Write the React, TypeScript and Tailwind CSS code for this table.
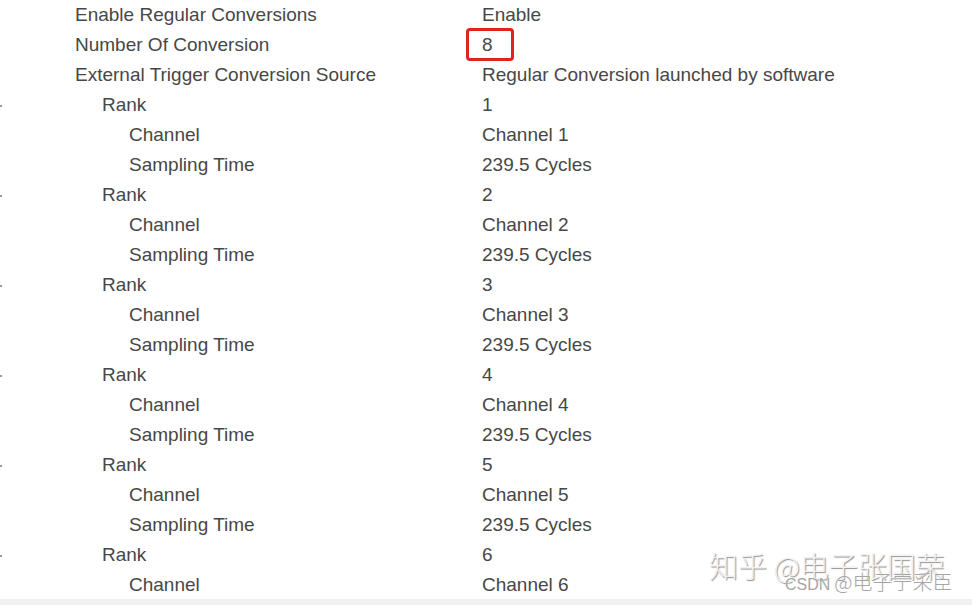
import React from "react";

type Row = { level: 0 | 1 | 2; label: string; value: string; dot?: boolean; boxed?: boolean };

const rows: Row[] = [
  { level: 0, label: "Enable Regular Conversions", value: "Enable" },
  { level: 0, label: "Number Of Conversion", value: "8", boxed: true },
  { level: 0, label: "External Trigger Conversion Source", value: "Regular Conversion launched by software" },
];
for (let i = 1; i <= 6; i++) {
  rows.push({ level: 1, label: "Rank", value: String(i), dot: true });
  rows.push({ level: 2, label: "Channel", value: `Channel ${i}` });
  if (i < 6) rows.push({ level: 2, label: "Sampling Time", value: "239.5 Cycles" });
}

const indent = ["pl-0", "pl-[27px]", "pl-[54px]"];

export default function App() {
  return (
    <div
      className="relative flex h-[605px] w-[972px] flex-col overflow-hidden bg-white text-[19px] text-[#474747]"
      style={{ fontFamily: '"Liberation Sans", Arial, sans-serif' }}
    >
      <div className="flex h-[599px] shrink-0 flex-col overflow-hidden">
        {rows.map((r, i) => (
          <div key={i} className="flex h-[30px] shrink-0 items-center leading-[30px]">
            <div className="flex w-[75px] items-center">
              {r.dot && <span className="mt-[1px] block h-[2px] w-[2px] bg-[#9a9a9a]" />}
            </div>
            <div className={`w-[407px] whitespace-nowrap ${indent[r.level]}`}>{r.label}</div>
            <div className="relative whitespace-nowrap">
              {r.value}
              {r.boxed && (
                <span className="absolute left-[-16px] top-[-2px] h-[33px] w-[48px] rounded-[4px] border-[3px] border-[#e3221f]" />
              )}
            </div>
          </div>
        ))}
      </div>
      <div className="h-[6px] shrink-0 bg-[#f0f1f3]" />

      <div
        className="pointer-events-none absolute left-[709px] top-[548px] whitespace-nowrap text-[29px] leading-[34px] text-[#f2f2f2] [text-shadow:1px_1px_1px_#8f8f8f]"
        style={{ fontFamily: '"Noto Sans CJK SC", "Liberation Sans", sans-serif', fontWeight: 300 }}
      >
        知乎 @电子张国荣
      </div>
      <div
        className="pointer-events-none absolute left-[785px] top-[571px] flex items-baseline whitespace-nowrap leading-[22px] text-[#a6a6a6] [text-shadow:0_0_1px_#ffffff]"
        style={{ fontFamily: '"Liberation Sans", "Noto Sans CJK SC", sans-serif' }}
      >
        <span className="text-[16px]">CSDN</span>
        <span className="ml-[4px] text-[20px]" style={{ fontFamily: '"Noto Sans CJK SC", sans-serif', fontWeight: 300 }}>
          @电子宁采臣
        </span>
      </div>
    </div>
  );
}
